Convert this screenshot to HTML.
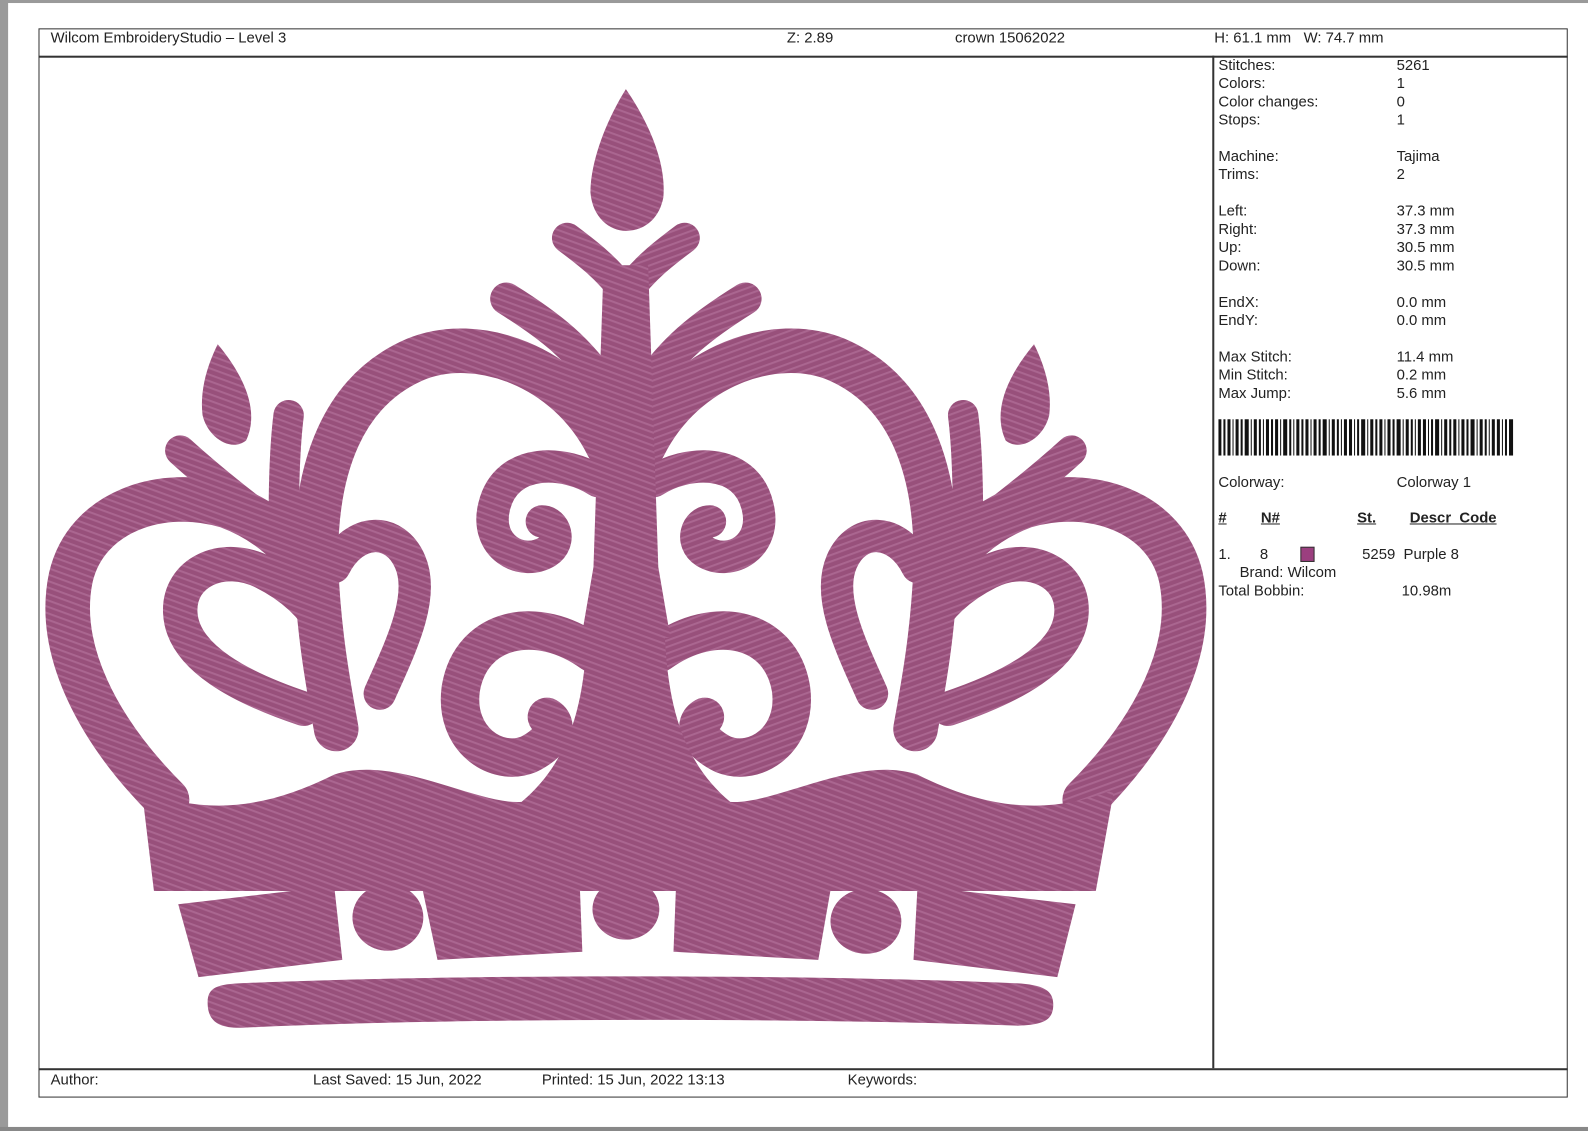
<!DOCTYPE html>
<html><head><meta charset="utf-8"><style>
html,body{margin:0;padding:0;background:#fff;}
body{width:1588px;height:1131px;overflow:hidden;position:relative;font-family:"Liberation Sans",Arial,sans-serif;color:#222;}
#w{position:absolute;left:0;top:0;width:1568px;height:1117px;transform:scale(1.01276,1.01253);transform-origin:0 0;}
.t{position:absolute;font-size:14.7px;line-height:16px;white-space:nowrap;}
.u{text-decoration:underline;font-weight:bold;}
</style></head><body>
<div id="w">
<div style="position:absolute;left:0;top:0;width:8px;height:1117px;background:#9a9a9a"></div>
<div style="position:absolute;left:0;top:0;width:1568px;height:3px;background:#9a9a9a"></div>
<div style="position:absolute;left:0;top:1113px;width:1568px;height:4px;background:#888"></div>
<div style="position:absolute;left:38px;top:28px;width:1508px;height:1054px;border:1.5px solid #333"></div>
<div style="position:absolute;left:38px;top:55px;width:1510px;height:1.5px;background:#333"></div>
<div style="position:absolute;left:38px;top:1055px;width:1510px;height:1.5px;background:#333"></div>
<div style="position:absolute;left:1197px;top:55px;width:1.5px;height:1000px;background:#333"></div>

<div class="t" style="left:50px;top:30px">Wilcom EmbroideryStudio – Level 3</div>
<div class="t" style="left:777px;top:30px">Z: 2.89</div>
<div class="t" style="left:943px;top:30px">crown 15062022</div>
<div class="t" style="left:1199px;top:30px">H: 61.1 mm&nbsp;&nbsp;&nbsp;W: 74.7 mm</div>

<div class="t" style="left:50px;top:1059px">Author:</div>
<div class="t" style="left:309px;top:1059px">Last Saved: 15 Jun, 2022</div>
<div class="t" style="left:535px;top:1059px">Printed: 15 Jun, 2022 13:13</div>
<div class="t" style="left:837px;top:1059px">Keywords:</div>

<div class="t" style="left:1203px;top:56px;line-height:18px">Stitches:<br>Colors:<br>Color changes:<br>Stops:<br><br>Machine:<br>Trims:<br><br>Left:<br>Right:<br>Up:<br>Down:<br><br>EndX:<br>EndY:<br><br>Max Stitch:<br>Min Stitch:<br>Max Jump:</div>
<div class="t" style="left:1379px;top:56px;line-height:18px">5261<br>1<br>0<br>1<br><br>Tajima<br>2<br><br>37.3 mm<br>37.3 mm<br>30.5 mm<br>30.5 mm<br><br>0.0 mm<br>0.0 mm<br><br>11.4 mm<br>0.2 mm<br>5.6 mm</div>

<svg style="position:absolute;left:1203px;top:414px" width="292" height="36">
<g fill="#111">
<rect x="0" y="0" width="3" height="36"/><rect x="5" y="0" width="2" height="36"/><rect x="9" y="0" width="3" height="36"/><rect x="14" y="0" width="1" height="36"/><rect x="17" y="0" width="3" height="36"/><rect x="22" y="0" width="2" height="36"/><rect x="26" y="0" width="4" height="36"/><rect x="32" y="0" width="1" height="36"/><rect x="35" y="0" width="3" height="36"/><rect x="40" y="0" width="2" height="36"/><rect x="44" y="0" width="1" height="36"/><rect x="47" y="0" width="3" height="36"/><rect x="52" y="0" width="2" height="36"/><rect x="56" y="0" width="3" height="36"/><rect x="61" y="0" width="1" height="36"/><rect x="64" y="0" width="4" height="36"/><rect x="70" y="0" width="2" height="36"/><rect x="74" y="0" width="1" height="36"/><rect x="77" y="0" width="3" height="36"/><rect x="82" y="0" width="2" height="36"/><rect x="86" y="0" width="3" height="36"/><rect x="91" y="0" width="1" height="36"/><rect x="94" y="0" width="3" height="36"/><rect x="99" y="0" width="2" height="36"/><rect x="103" y="0" width="4" height="36"/><rect x="109" y="0" width="1" height="36"/><rect x="112" y="0" width="3" height="36"/><rect x="117" y="0" width="2" height="36"/><rect x="121" y="0" width="1" height="36"/><rect x="124" y="0" width="3" height="36"/><rect x="129" y="0" width="3" height="36"/><rect x="134" y="0" width="1" height="36"/><rect x="137" y="0" width="2" height="36"/><rect x="141" y="0" width="4" height="36"/><rect x="147" y="0" width="1" height="36"/><rect x="150" y="0" width="3" height="36"/><rect x="155" y="0" width="2" height="36"/><rect x="159" y="0" width="3" height="36"/><rect x="164" y="0" width="1" height="36"/><rect x="167" y="0" width="3" height="36"/><rect x="172" y="0" width="2" height="36"/><rect x="176" y="0" width="4" height="36"/><rect x="182" y="0" width="1" height="36"/><rect x="185" y="0" width="3" height="36"/><rect x="190" y="0" width="2" height="36"/><rect x="194" y="0" width="1" height="36"/><rect x="197" y="0" width="3" height="36"/><rect x="202" y="0" width="3" height="36"/><rect x="207" y="0" width="1" height="36"/><rect x="210" y="0" width="2" height="36"/><rect x="214" y="0" width="4" height="36"/><rect x="220" y="0" width="1" height="36"/><rect x="223" y="0" width="3" height="36"/><rect x="228" y="0" width="2" height="36"/><rect x="232" y="0" width="3" height="36"/><rect x="237" y="0" width="1" height="36"/><rect x="240" y="0" width="3" height="36"/><rect x="245" y="0" width="2" height="36"/><rect x="249" y="0" width="4" height="36"/><rect x="255" y="0" width="1" height="36"/><rect x="258" y="0" width="3" height="36"/><rect x="263" y="0" width="2" height="36"/><rect x="267" y="0" width="1" height="36"/><rect x="270" y="0" width="3" height="36"/><rect x="275" y="0" width="3" height="36"/><rect x="280" y="0" width="1" height="36"/><rect x="283" y="0" width="2" height="36"/><rect x="287" y="0" width="4" height="36"/>
</g></svg>

<div class="t" style="left:1203px;top:469px">Colorway:</div>
<div class="t" style="left:1379px;top:469px">Colorway 1</div>
<div class="t u" style="left:1203px;top:504px">#</div>
<div class="t u" style="left:1245px;top:504px">N#</div>
<div class="t u" style="left:1340px;top:504px">St.</div>
<div class="t u" style="left:1392px;top:504px">Descr_Code</div>
<div class="t" style="left:1203px;top:540px">1.</div>
<div class="t" style="left:1244px;top:540px">8</div>
<div style="position:absolute;left:1284px;top:540px;width:12px;height:13px;background:#9b3f7f;border:1px solid #333"></div>
<div class="t" style="left:1345px;top:540px">5259&nbsp;&nbsp;Purple 8</div>
<div class="t" style="left:1224px;top:558px">Brand: Wilcom</div>
<div class="t" style="left:1203px;top:576px">Total Bobbin:</div>
<div class="t" style="left:1384px;top:576px">10.98m</div>

<svg style="position:absolute;left:0;top:0" width="1568" height="1117">
<defs>
<pattern id="st" width="6" height="6" patternUnits="userSpaceOnUse" patternTransform="rotate(20)">
<rect width="6" height="6" fill="#98507b"/><rect width="6" height="2" fill="#aa6690"/>
</pattern>
</defs>
<g id="L" fill="none" stroke="url(#st)" stroke-linecap="round" stroke-linejoin="round">
<path d="M600 440 C560 360 470 330 410 355 C340 385 310 460 312 560 C315 630 325 680 332 720" stroke-width="44"/>
<path d="M165 790 C95 720 55 640 70 570 C85 505 160 480 225 500 C265 515 292 540 312 575" stroke-width="44"/>
<path d="M300 700 C240 680 180 650 178 605 C176 565 220 545 260 565 C290 580 310 600 320 620" stroke-width="34"/>
<path d="M375 685 C395 640 420 590 405 555 C390 520 350 520 330 560" stroke-width="32"/>
<path d="M280 560 C280 500 280 450 285 410" stroke-width="30"/>
<path d="M270 520 C230 490 200 465 178 445" stroke-width="30"/>
<path d="M590 475 C560 455 500 450 488 500 C478 540 515 560 540 545 C555 535 548 515 535 515" stroke-width="32"/>
<path d="M585 645 C530 605 465 620 455 680 C448 730 490 758 522 745 C548 732 552 715 540 708" stroke-width="38"/>
<path d="M500 295 C540 320 575 345 605 395" stroke-width="32"/>
<path d="M560 235 C580 250 600 265 618 290" stroke-width="30"/>
</g>
<use href="#L" transform="translate(1236,0) scale(-1,1)"/>
<g fill="url(#st)">
<path d="M215 340 C240 370 257 405 243 435 C228 447 205 432 200 410 C197 385 205 360 215 340 Z"/>
<path d="M1021 340 C996 370 979 405 993 435 C1008 447 1031 432 1036 410 C1039 385 1031 360 1021 340 Z"/>
<path d="M618 88 C640 120 658 160 655 195 C650 220 632 228 618 228 C602 228 585 215 583 190 C583 160 598 120 618 88 Z"/>
<polygon points="596,262 640,262 650,560 662,630 574,630 586,560"/>
<path d="M140 780 C200 805 260 800 330 765 C390 745 470 795 515 792 C565 750 578 690 580 615 L656 615 C658 690 671 750 721 792 C766 795 846 745 906 765 C976 800 1036 805 1100 780 L1082 880 L152 880 Z"/>
<polygon points="176,893 330,875 338,948 196,965"/>
<polygon points="415,868 572,862 575,940 432,948"/>
<polygon points="668,862 822,868 808,948 665,940"/>
<polygon points="906,875 1062,893 1044,965 902,948"/>
<ellipse cx="383" cy="906" rx="35" ry="33"/>
<ellipse cx="618" cy="898" rx="33" ry="30"/>
<ellipse cx="855" cy="910" rx="35" ry="32"/>
<path d="M205 990 C205 975 215 972 240 971 C450 962 790 962 1000 971 C1030 972 1040 978 1040 992 C1040 1008 1030 1012 1005 1013 C790 1005 450 1005 240 1015 C215 1016 205 1008 205 990 Z"/>
</g>
</svg>
</div>
</body></html>
